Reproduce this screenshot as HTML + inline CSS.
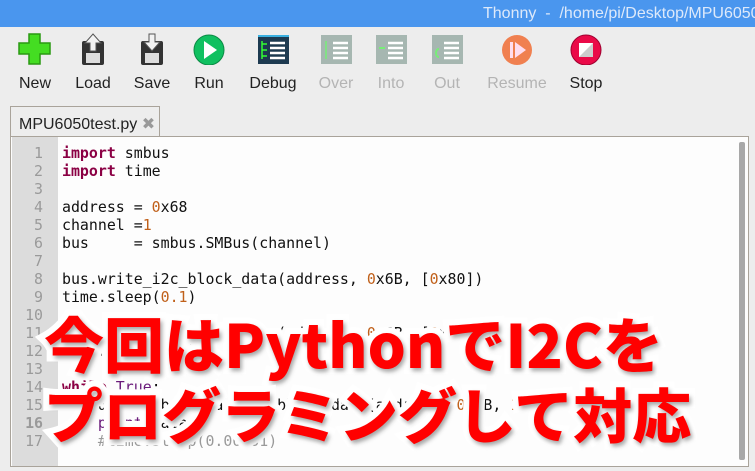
<!DOCTYPE html>
<html><head><meta charset="utf-8"><style>
body{margin:0;width:755px;height:471px;overflow:hidden;background:#ededed;font-family:"Liberation Sans",sans-serif;position:relative}
.title{position:absolute;left:0;top:0;width:755px;height:27px;background:#4a96ee;overflow:hidden}
.title span{position:absolute;left:483px;top:5px;font-size:16px;color:#dde9fa;white-space:nowrap}
.tb{position:absolute;top:33px;width:60px;text-align:center}
.tb svg{display:block;margin:0 auto}
.tb div{font-size:16px;margin-top:10px;color:#222}
.tb.dis div{color:#b4b4b4}
.tab{position:absolute;left:10px;top:106px;width:148px;height:30px;border:1px solid #a9a39a;border-bottom:none;background:#ededed;font-size:16px;color:#222}
.tab span{position:absolute;left:8px;top:7px}
.ed{position:absolute;left:10px;top:136px;width:737px;height:329px;border:1px solid #a9a39a;background:#fdfdfd}
.gut{position:absolute;left:1px;top:0;width:46px;height:329px;background:#dcdcdc}
.code{position:absolute;top:7px;font-family:"DejaVu Sans Mono","Liberation Mono",monospace;font-size:14.9px;line-height:18px;white-space:pre}
.ln{left:1px;width:31px;text-align:right;color:#9a9a9a}
.src{left:51px;color:#111}
.k{color:#8b0044;font-weight:bold}.n{color:#c0601a}.p{color:#6a1a7a}.c{color:#9a9a9a}
.sb{position:absolute;left:728px;top:5px;width:6px;height:318px;background:#a8a8a8;border-radius:2px}
.ov{position:absolute;left:44px;font-family:"Noto Sans CJK JP","Liberation Sans",sans-serif;font-weight:900;color:#f00;-webkit-text-stroke:12px #fff;paint-order:stroke fill;white-space:nowrap;line-height:70px;text-shadow:2px 3px 4px rgba(0,0,0,.35)}
</style></head><body>
<div class="title"><span>Thonny &nbsp;- &nbsp;/home/pi/Desktop/MPU6050test.py</span></div>

<div class="tb" style="left:5px"><svg width="34" height="32" viewBox="0 0 34 32"><path d="M11 1h11v9h10v11h-10v10h-11v-10h-10v-11h10z" fill="#44dd22" stroke="#2a9a12" stroke-width="1.5"/></svg><div>New</div></div>
<div class="tb" style="left:63px"><svg width="34" height="32" viewBox="0 0 34 32"><rect x="6" y="8" width="22" height="24" rx="2" fill="#333"/><rect x="10" y="20" width="14" height="10" fill="#ddd"/><path d="M17 1l8 9h-5v8h-6v-8h-5z" fill="#f2f2f2" stroke="#555"/></svg><div>Load</div></div>
<div class="tb" style="left:122px"><svg width="34" height="32" viewBox="0 0 34 32"><rect x="6" y="8" width="22" height="24" rx="2" fill="#333"/><rect x="10" y="20" width="14" height="10" fill="#ddd"/><path d="M14 1h6v8h5l-8 9-8-9h5z" fill="#f2f2f2" stroke="#555"/></svg><div>Save</div></div>
<div class="tb" style="left:179px"><svg width="34" height="32" viewBox="0 0 34 32"><circle cx="17" cy="17" r="15" fill="#10c060" stroke="#0a8a44"/><path d="M12 8l13 9-13 9z" fill="#fff"/></svg><div>Run</div></div>
<div class="tb" style="left:243px"><svg width="34" height="32" viewBox="0 0 34 32"><rect x="2" y="2" width="31" height="29" fill="#1d3a50"/><rect x="2" y="2" width="31" height="2" fill="#3ab0e0"/><path d="M14 10h15M14 15h15M14 20h15M14 25h15" stroke="#fff" stroke-width="2.5"/><path d="M6 8v18M6 11h5M6 17h5M6 23h5" stroke="#3f3" stroke-width="1.5"/></svg><div>Debug</div></div>
<div class="tb dis" style="left:306px"><svg width="34" height="32" viewBox="0 0 34 32"><rect x="2" y="2" width="31" height="29" fill="#6c8a80" opacity=".55"/><path d="M14 10h15M14 15h15M14 20h15M14 25h15" stroke="#fff" stroke-width="2.5"/><path d="M7 8v18" stroke="#7e7" stroke-width="1.5"/></svg><div>Over</div></div>
<div class="tb dis" style="left:361px"><svg width="34" height="32" viewBox="0 0 34 32"><rect x="2" y="2" width="31" height="29" fill="#6c8a80" opacity=".55"/><path d="M14 10h15M14 15h15M14 20h15M14 25h15" stroke="#fff" stroke-width="2.5"/><path d="M5 15h6" stroke="#7e7" stroke-width="2"/></svg><div>Into</div></div>
<div class="tb dis" style="left:417px"><svg width="34" height="32" viewBox="0 0 34 32"><rect x="2" y="2" width="31" height="29" fill="#6c8a80" opacity=".55"/><path d="M14 10h15M14 15h15M14 20h15M14 25h15" stroke="#fff" stroke-width="2.5"/><path d="M9 16c-4 0-4 8 0 8" stroke="#7e7" stroke-width="2" fill="none"/></svg><div>Out</div></div>
<div class="tb dis" style="left:487px;width:60px"><svg width="34" height="32" viewBox="0 0 34 32"><circle cx="17" cy="17" r="15" fill="#f08050"/><rect x="10" y="9" width="3" height="16" fill="#fde"/><path d="M15 9l11 8-11 8z" fill="#fde"/></svg><div>Resume</div></div>
<div class="tb" style="left:556px"><svg width="34" height="32" viewBox="0 0 34 32"><circle cx="17" cy="17" r="15" fill="#ea0a48" stroke="#a00030"/><rect x="10" y="10" width="14" height="14" fill="#fff"/><path d="M24 10v14h-14z" fill="#ccc"/></svg><div>Stop</div></div>

<div class="tab"><span>MPU6050test.py <span style="color:#999;position:static">✖</span></span></div>
<div class="ed">
<div class="gut"></div>
<div class="code ln">1
2
3
4
5
6
7
8
9
10
11
12
13
14
15
<b>16</b>
17</div>
<div class="code src"><span class="k">import</span> smbus
<span class="k">import</span> time

address = <span class="n">0</span>x68
channel =<span class="n">1</span>
bus     = smbus.SMBus(channel)

bus.write_i2c_block_data(address, <span class="n">0</span>x6B, [<span class="n">0</span>x80])
time.sleep(<span class="n">0.1</span>)

bus.write_i2c_block_data(address, <span class="n">0</span>x6B, [<span class="n">0</span>x00])
time.sleep(<span class="n">0.1</span>)

<span class="k">while</span> <span class="p">True</span>:
    data = bus.read_i2c_block_data(address, <span class="n">0</span>x3B, <span class="n">14</span>)
    <span class="p">print</span>(data)
    <span class="c">#time.sleep(0.00001)</span></div>
<div class="sb"></div>
</div>

<div class="ov" style="top:308px;font-size:60px">今回はPythonでI2Cを</div>
<div class="ov" style="top:378px;font-size:59px">プログラミングして対応</div>
</body></html>
